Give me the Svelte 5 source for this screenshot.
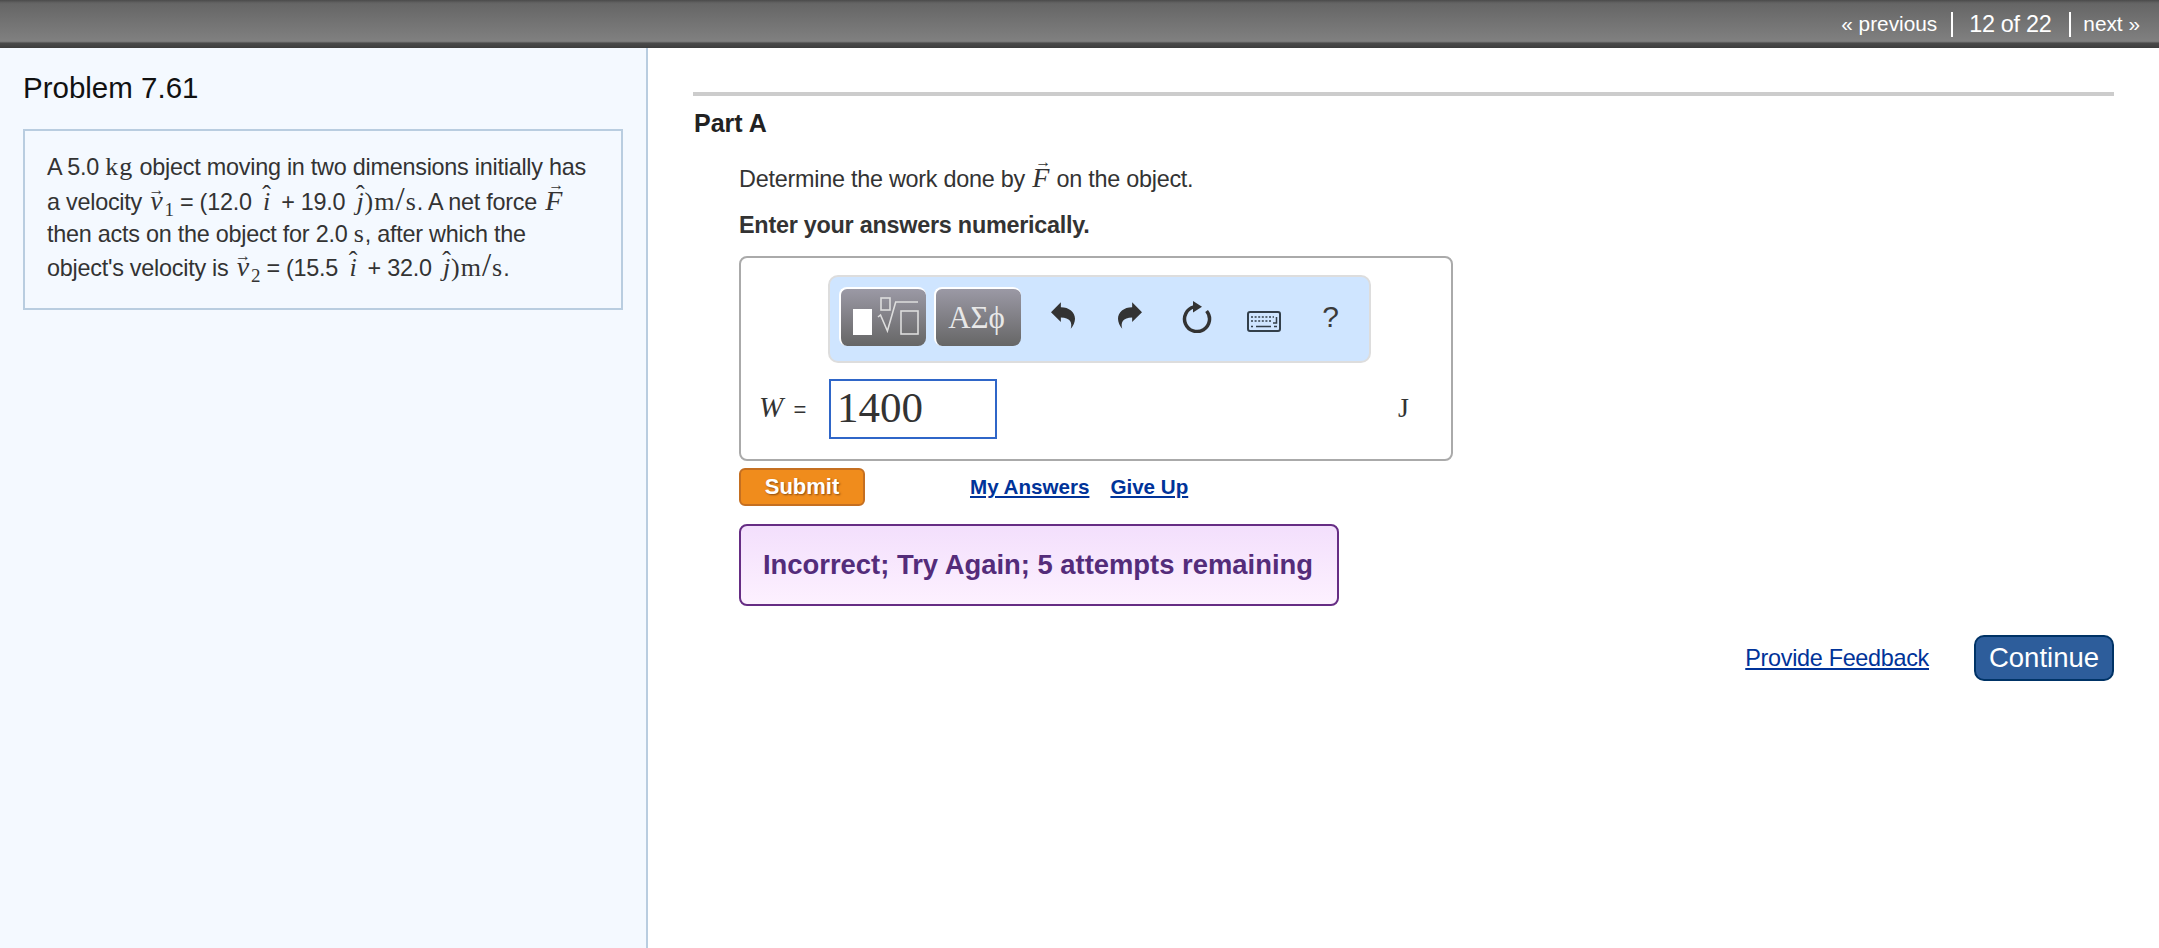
<script>
  let answer = $state('1400')
</script>

{#snippet undoIcon()}
  <path d="M0 30 L30 0 V15 C55 15 73 30 73 50 C73 60 68 72 60 80 C66 62 58 46 30 46 V60 Z" fill="#333" />
{/snippet}

<div class="topbar">
  <a href="#prev" class="nav-link">« previous</a>
  <span class="counter">12 of 22</span>
  <a href="#next" class="nav-link next">next »</a>
</div>

<div class="page">
  <aside class="left">
    <h1>Problem 7.61</h1>
    <div class="intro">
      A 5.0 <span class="rm">kg</span> object moving in two dimensions initially has
      a velocity <span class="it vec small">v</span><sub>1</sub> = (12.0 <span class="it hat">i</span> + 19.0 <span class="it hat jay">j</span><span class="rm">)m<span class="slash">/</span>s</span>. A net force <span class="it vec big tall">F</span>
      then acts on the object for 2.0 <span class="rm">s</span>, after which the
      object's velocity is <span class="it vec small lift">v</span><sub>2</sub> = (15.5 <span class="it hat">i</span> + 32.0 <span class="it hat jay">j</span><span class="rm">)m<span class="slash">/</span>s</span>.
    </div>
  </aside>

  <main class="main">
    <div class="rule"></div>
    <h2>Part A</h2>
    <div class="question">
      <p class="ask">Determine the work done by <span class="it vec big">F</span> on the object.</p>
      <p class="hint">Enter your answers numerically.</p>

      <div class="answer-box">
        <div class="toolbar">
          <button type="button" class="tpl" aria-label="templates">
            <svg width="87" height="59" viewBox="0 0 87 59">
              <rect x="14" y="22" width="19" height="26" fill="#fff" />
              <g fill="none" stroke="#ddd" stroke-width="1.6">
                <rect x="42" y="11" width="9" height="12" />
                <path d="M39 30 L41.5 28 L48.4 44 L56.7 15 H79" />
                <rect x="62" y="24" width="17" height="23" />
              </g>
            </svg>
          </button>
          <button type="button" class="tpl greek">ΑΣϕ</button>
          <span class="tool">
            <svg width="24" height="27" viewBox="0 0 73 80">{@render undoIcon()}</svg>
          </span>
          <span class="tool">
            <svg width="24" height="27" viewBox="0 0 73 80"><g transform="translate(73 0) scale(-1 1)">{@render undoIcon()}</g></svg>
          </span>
          <span class="tool reload">
            <svg width="30" height="33" viewBox="0 0 30 33">
              <path d="M24.6 11 A12.5 12.5 0 1 1 12 6.9" fill="none" stroke="#333" stroke-width="3.5" />
              <path d="M11 1 L20 6.8 L11 12.5 Z" fill="#333" />
            </svg>
          </span>
          <span class="tool kb">
            <svg width="34" height="21" viewBox="0 0 34 21">
              <rect x="1" y="1" width="32" height="19" rx="2" fill="none" stroke="#333f4a" stroke-width="2" />
              <g fill="none" stroke="#333f4a" stroke-width="1.5">
                <path d="M4 6 H27" stroke-dasharray="2 1.6" />
                <path d="M4 10 H25" stroke-dasharray="2 1.6" />
                <path d="M29.5 6 V12 H26" />
                <path d="M4 15.5 H6 M9 15.5 H24 M27 15.5 H30" />
              </g>
            </svg>
          </span>
          <span class="tool help">?</span>
        </div>

        <div class="input-row">
          <span class="var"><i>W</i> <span class="eq">=</span></span>
          <input class="value" type="text" bind:value={answer} />
          <span class="unit">J</span>
        </div>
      </div>

      <div class="actions">
        <button type="button" class="submit">Submit</button>
        <a href="#answers" class="act-link first">My Answers</a>
        <a href="#giveup" class="act-link">Give Up</a>
      </div>

      <div class="feedback">Incorrect; Try Again; 5 attempts remaining</div>
    </div>

    <div class="footer">
      <a href="#feedback" class="provide">Provide Feedback</a>
      <button type="button" class="continue">Continue</button>
    </div>
  </main>
</div>

<style>
  :global(body) {
    margin: 0;
    font-family: "Liberation Sans", Arial, sans-serif;
    color: #333;
    background: #fff;
  }

  .topbar {
    box-sizing: border-box;
    height: 48px;
    display: flex;
    justify-content: flex-end;
    align-items: center;
    padding: 0 19px 0 0;
    color: #fff;
    background: linear-gradient(#4a4a4a 0, #5f5f5f 5%, #666 8%, #808080 86%, #4a4a4a 90%, #3d3d3d 100%);
  }
  .nav-link { color: #fff; text-decoration: none; font-size: 20.8px; }
  .counter {
    font-size: 23.4px;
    letter-spacing: -.3px;
    margin-left: 14px;
    padding: 0 18px 0 16px;
    border-left: 2px solid #fff;
    border-right: 2px solid #fff;
    line-height: 25px;
  }
  .next { margin-left: 12px; }

  .page { display: flex; height: 900px; overflow: hidden; }

  .left {
    box-sizing: border-box;
    width: 648px;
    background: #f4f9ff;
    border-right: 2px solid #b9cde0;
    padding: 23px 23px 0;
  }
  h1 { margin: 0 0 24px; font-size: 29.5px; line-height: 34px; font-weight: 400; color: #111; }

  .intro {
    box-sizing: border-box;
    width: 600px;
    border: 2px solid #b9cde0;
    padding: 20px 20px 0 22px;
    height: 181px;
    font-size: 23.4px;
    letter-spacing: -.25px;
    line-height: 32px;
  }

  .rm { font-family: "Liberation Serif", serif; font-size: 26px; letter-spacing: 1px; }
  .slash { font-size: 33px; font-weight: 400; line-height: 0; }
  .it { font-family: "Liberation Serif", serif; font-style: italic; font-size: 26px; }
  sub { font-family: "Liberation Serif", serif; font-size: 19px; line-height: 0; }

  .vec, .hat { position: relative; display: inline-block; line-height: 28px; }
  .vec { padding: 0 1px; }
  .hat { padding: 0 5px; }
  .jay { margin-right: -4px; }
  .small { font-size: 28px; padding: 0 2px; }
  .tall { padding-top: 4px; margin-left: 1px; }
  .lift { padding-top: 3px; }
  .vec::before, .hat::before {
    position: absolute;
    left: 0;
    right: 0;
    text-align: center;
    font-style: normal;
    font-family: "Liberation Serif", serif;
  }
  .vec::before { content: '→'; top: -7px; font-size: 16px; line-height: 20px; }
  .lift::before { top: -4px; }
  .hat::before { content: 'ˆ'; top: -5px; font-size: 26px; line-height: 24px; }
  .big { font-size: 28px; }
  .big::before { top: -12px; left: 4px; }
  .tall::before { top: -8px; }

  .main { flex: 1; padding: 44px 45px 0 45px; min-width: 0; }
  .rule { height: 4px; background: #ccc; }
  h2 { margin: 12px 0 0; padding-left: 1px; font-size: 25px; line-height: 30px; font-weight: 700; color: #222; }

  .question { padding-left: 46px; }
  .ask { margin: 26px 0 0; font-size: 23.4px; letter-spacing: -.25px; line-height: 30px; }
  .hint { margin: 16px 0 0; font-size: 23.4px; letter-spacing: -.25px; line-height: 30px; font-weight: 700; }

  .answer-box {
    box-sizing: border-box;
    width: 714px;
    height: 205px;
    margin-top: 16px;
    border: 2px solid #aaa;
    border-radius: 8px;
    padding: 17px 0 0;
  }

  .toolbar {
    box-sizing: border-box;
    width: 543px;
    height: 88px;
    margin-left: 87px;
    padding: 10px 9px;
    display: flex;
    align-items: flex-start;
    background: #cfe5ff;
    border: 2px solid #ddd;
    border-radius: 10px;
  }
  .tpl {
    box-sizing: border-box;
    width: 87px;
    height: 59px;
    flex: none;
    padding: 0;
    margin-right: 8px;
    border: none;
    border-top: 2px solid #fff;
    border-left: 2px solid #fff;
    border-radius: 8px;
    background: linear-gradient(#9b99a5, #666);
    color: #e8e8e8;
    overflow: hidden;
  }
  .tpl svg { display: block; margin: -2px 0 0 -2px; }
  .greek { padding-right: 4px; font-family: "Liberation Serif", serif; font-size: 31px; }
  .tool { width: 67px; height: 56px; flex: none; display: flex; justify-content: center; align-items: center; }
  .reload { padding-top: 1px; }
  .kb { padding-top: 6px; }
  .help { padding-top: 2px; font-size: 30px; color: #3a3a3a; }

  .input-row {
    display: flex;
    align-items: center;
    margin-top: 16px;
    padding: 0 42px 0 18px;
  }
  .var { width: 70px; padding-bottom: 3px; font-family: "Liberation Serif", serif; font-size: 29px; }
  .eq { margin-left: 3px; font-family: "Liberation Sans", sans-serif; font-size: 22px; }
  .value {
    box-sizing: border-box;
    width: 168px;
    height: 60px;
    padding: 0 6px 3px;
    border: 2px solid #2f66c8;
    border-radius: 0;
    outline: none;
    font-family: "Liberation Serif", serif;
    font-size: 43px;
    color: #333;
  }
  .unit { margin-left: auto; padding-bottom: 2px; font-family: "Liberation Serif", serif; font-size: 28px; }

  .actions { display: flex; align-items: center; margin-top: 7px; }
  .submit {
    box-sizing: border-box;
    width: 126px;
    height: 38px;
    padding: 0;
    border: 2px solid #c56f20;
    border-radius: 6px;
    background: #f08c1c;
    color: #fff;
    font-family: inherit;
    font-size: 22px;
    font-weight: 700;
    text-shadow: 1px 1px 2px #8a4a10;
  }
  .act-link { color: #003399; font-size: 20.6px; font-weight: 700; margin-left: 21px; }
  .first { margin-left: 105px; }

  .feedback {
    box-sizing: border-box;
    width: 600px;
    height: 82px;
    margin-top: 18px;
    padding-left: 22px;
    display: flex;
    align-items: center;
    border: 2px solid #662d84;
    border-radius: 8px;
    background: linear-gradient(#f3dffc, #fdf1ff);
    color: #542c7a;
    font-size: 27.4px;
    font-weight: 700;
  }

  .footer {
    display: flex;
    justify-content: flex-end;
    align-items: center;
    margin-top: 29px;
    gap: 45px;
  }
  .provide { color: #003399; font-size: 23.4px; letter-spacing: -.3px; }
  .continue {
    box-sizing: border-box;
    width: 140px;
    height: 46px;
    padding: 0;
    border: 2px solid #003366;
    border-radius: 10px;
    background: #2d5d9b;
    color: #fff;
    font-family: inherit;
    font-size: 27.5px;
  }
</style>
